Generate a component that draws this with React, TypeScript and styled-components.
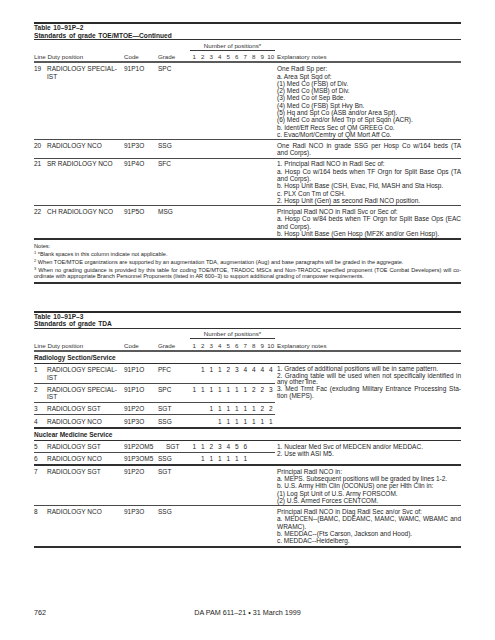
import styled, { createGlobalStyle } from 'styled-components';

const GlobalStyle = createGlobalStyle`
  body {
    margin: 0;
    background: #fff;
    color: #1e1e1e;
    font-family: 'Liberation Sans', Arial, sans-serif;
  }
`;

const COLS = '13px 77px 34px 32px repeat(10, 8.5px)';

type Nums = (number | '')[];

interface Line {
  t: string;
  fill?: boolean;
}

const Page = styled.div`
  box-sizing: border-box;
  width: 495px;
  height: 640px;
  padding: 22px 34px 23px;
  display: flex;
  flex-direction: column;
`;

const Table = styled.section<{ $gap?: number }>`
  border-top: 2px solid #2a2a2a;
  margin-top: ${(p) => p.$gap ?? 0}px;
`;

const Caption = styled.div`
  font-weight: 700;
  font-size: 6.6px;
  line-height: 7.6px;
  word-spacing: 0.8px;
  border-bottom: 1px solid #333;
`;

const Head = styled.div`
  display: grid;
  grid-template-columns: ${COLS} 2px 1fr;
  border-bottom: 2px solid #5a5a5a;
  font-size: 6.2px;
  line-height: 7px;
  color: #333;
`;

const PosLabel = styled.div`
  grid-column: 5 / 15;
  grid-row: 1;
  text-align: center;
  padding: 1.5px 0 1px;
  border-bottom: 1px solid #3a3a3a;
`;

const HeadCell = styled.div<{ $span?: number; $center?: boolean }>`
  grid-row: 2;
  grid-column: span ${(p) => p.$span ?? 1};
  padding: 2.8px 0 1px;
  white-space: nowrap;
  text-align: ${(p) => (p.$center ? 'center' : 'left')};
`;

const Row = styled.div<{ $rule?: 'thin' | 'thick' }>`
  display: grid;
  grid-template-columns: ${COLS} 2px 1fr;
  padding: 1.8px 0 1px;
  font-size: 6.5px;
  line-height: 7.3px;
  border-bottom: ${(p) => (p.$rule === 'thick' ? '2px solid #2f2f2f' : '1.5px solid #4a4a4a')};
`;

const Cell = styled.div<{ $shift?: number }>`
  white-space: nowrap;
  padding-left: ${(p) => p.$shift ?? 0}px;
`;

const Num = styled.div`
  text-align: center;
`;

const Notes = styled.div`
  grid-column: 16;
`;

const NoteLine = styled.div<{ $fill?: boolean }>`
  white-space: ${(p) => (p.$fill ? 'normal' : 'nowrap')};
  text-align: ${(p) => (p.$fill ? 'justify' : 'left')};
  text-align-last: ${(p) => (p.$fill ? 'justify' : 'left')};
`;

const Section = styled.div`
  font-weight: 700;
  font-size: 6.5px;
  line-height: 7.3px;
  padding: 2px 0 1.5px;
  border-bottom: 1px solid #2f2f2f;
`;

const Group = styled.div`
  display: grid;
  grid-template-columns: 241px 2px 1fr;
  border-bottom: 2px solid #2f2f2f;
  font-size: 6.5px;
  line-height: 7.3px;
`;

const SubRow = styled.div`
  display: grid;
  grid-template-columns: ${COLS};
  padding: 2.3px 0 1.7px;

  & + & {
    border-top: 1px solid #4a4a4a;
  }
`;

const GroupNotes = styled.div<{ $lh: number }>`
  grid-column: 3;
  padding-top: 2.3px;
  line-height: ${(p) => p.$lh}px;
`;

const NotesBlock = styled.div`
  padding: 2.5px 0 3.5px;
  border-bottom: 2px solid #2f2f2f;
  font-size: 5.6px;
  line-height: 6px;
`;

const FootNote = styled.div`
  margin-top: 2px;
`;

const FootLine = styled.span<{ $fill?: boolean }>`
  display: block;
  text-align: ${(p) => (p.$fill ? 'justify' : 'left')};
  text-align-last: ${(p) => (p.$fill ? 'justify' : 'left')};
`;

const Sup = styled.sup`
  font-size: 4px;
  vertical-align: 2px;
  line-height: 0;
`;

const Footer = styled.footer`
  margin-top: auto;
  display: grid;
  grid-template-columns: 1fr auto 1fr;
  font-size: 7.2px;
  line-height: 9px;
`;

function NoteLines({ lines }: { lines: Line[] }) {
  return (
    <>
      {lines.map((l, i) => (
        <NoteLine key={i} $fill={l.fill}>
          {l.t}
        </NoteLine>
      ))}
    </>
  );
}

function TableHead() {
  return (
    <Head>
      <PosLabel>Number of positions*</PosLabel>
      <HeadCell $span={2}>Line Duty position</HeadCell>
      <HeadCell>Code</HeadCell>
      <HeadCell>Grade</HeadCell>
      {Array.from({ length: 10 }, (_, i) => (
        <HeadCell key={i} $center>
          {i + 1}
        </HeadCell>
      ))}
      <HeadCell />
      <HeadCell>Explanatory notes</HeadCell>
    </Head>
  );
}

interface Position {
  line: number;
  duty: string[];
  code: string;
  grade: string;
  nums?: Nums;
  shift?: number;
}

function PositionCells({ p }: { p: Position }) {
  const nums: Nums = p.nums ?? Array(10).fill('');
  return (
    <>
      <Cell>{p.line}</Cell>
      <Cell>
        {p.duty.map((d) => (
          <div key={d}>{d}</div>
        ))}
      </Cell>
      <Cell>{p.code}</Cell>
      <Cell $shift={p.shift}>{p.grade}</Cell>
      {nums.map((n, i) => (
        <Num key={i}>{n}</Num>
      ))}
    </>
  );
}

const toeRows: (Position & { notes: Line[] })[] = [
  {
    line: 19,
    duty: ['RADIOLOGY SPECIAL-', 'IST'],
    code: '91P1O',
    grade: 'SPC',
    notes: [
      { t: 'One Radl Sp per:' },
      { t: 'a. Area Spt Sqd of:' },
      { t: '(1) Med Co (FSB) of Div.' },
      { t: '(2) Med Co (MSB) of Div.' },
      { t: '(3) Med Co of Sep Bde.' },
      { t: '(4) Med Co (FSB) Spt Hvy Bn.' },
      { t: '(5) Hq and Spt Co (ASB and/or Area Spt).' },
      { t: '(6) Med Co and/or Med Trp of Spt Sqdn (ACR).' },
      { t: 'b. Ident/Eff Recs Sec of QM GREEG Co.' },
      { t: 'c. Evac/Mort/Cemtry of QM Mort Aff Co.' },
    ],
  },
  {
    line: 20,
    duty: ['RADIOLOGY NCO'],
    code: '91P3O',
    grade: 'SSG',
    notes: [
      { t: 'One Radl NCO in grade SSG per Hosp Co w/164 beds (TA', fill: true },
      { t: 'and Corps).' },
    ],
  },
  {
    line: 21,
    duty: ['SR RADIOLOGY NCO'],
    code: '91P4O',
    grade: 'SFC',
    notes: [
      { t: '1. Principal Radl NCO in Radl Sec of:' },
      { t: 'a. Hosp Co w/164 beds when TF Orgn for Split Base Ops (TA', fill: true },
      { t: 'and Corps).' },
      { t: 'b. Hosp Unit Base (CSH, Evac, Fld, MASH and Sta Hosp.' },
      { t: 'c. PLX Con Tm of CSH.' },
      { t: '2. Hosp Unit (Gen) as second Radl NCO position.' },
    ],
  },
  {
    line: 22,
    duty: ['CH RADIOLOGY NCO'],
    code: '91P5O',
    grade: 'MSG',
    notes: [
      { t: 'Principal Radl NCO in Radl Svc or Sec of:' },
      { t: 'a. Hosp Co w/84 beds when TF Orgn for Split Base Ops (EAC', fill: true },
      { t: 'and Corps).' },
      { t: 'b. Hosp Unit Base (Gen Hosp (MF2K and/or Gen Hosp).' },
    ],
  },
];

const radiologyGroup: Position[] = [
  { line: 1, duty: ['RADIOLOGY SPECIAL-', 'IST'], code: '91P1O', grade: 'PFC', nums: ['', 1, 1, 1, 2, 3, 4, 4, 4, 4] },
  { line: 2, duty: ['RADIOLOGY SPECIAL-', 'IST'], code: '91P1O', grade: 'SPC', nums: [1, 1, 1, 1, 1, 1, 1, 2, 2, 3] },
  { line: 3, duty: ['RADIOLOGY SGT'], code: '91P2O', grade: 'SGT', nums: ['', '', 1, 1, 1, 1, 1, 1, 2, 2] },
  { line: 4, duty: ['RADIOLOGY NCO'], code: '91P3O', grade: 'SSG', nums: ['', '', '', 1, 1, 1, 1, 1, 1, 1] },
];

const nuclearGroup: Position[] = [
  { line: 5, duty: ['RADIOLOGY SGT'], code: '91P2OM5', grade: 'SGT', shift: 8, nums: [1, 1, 2, 3, 4, 5, 6, '', '', ''] },
  { line: 6, duty: ['RADIOLOGY NCO'], code: '91P3OM5', grade: 'SSG', nums: ['', 1, 1, 1, 1, 1, 1, '', '', ''] },
];

const tdaRows: (Position & { notes: Line[] })[] = [
  {
    line: 7,
    duty: ['RADIOLOGY SGT'],
    code: '91P2O',
    grade: 'SGT',
    notes: [
      { t: 'Principal Radl NCO in:' },
      { t: 'a. MEPS. Subsequent positions will be graded by lines 1-2.' },
      { t: 'b. U.S. Army Hlth Clin (OCONUS) one per Hlth Clin in:' },
      { t: '(1) Log Spt Unit of U.S. Army FORSCOM.' },
      { t: '(2) U.S. Armed Forces CENTCOM.' },
    ],
  },
  {
    line: 8,
    duty: ['RADIOLOGY NCO'],
    code: '91P3O',
    grade: 'SSG',
    notes: [
      { t: 'Principal Radl NCO in Diag Radl Sec an/or Svc of:' },
      { t: 'a. MEDCEN--(BAMC, DDEAMC, MAMC, WAMC, WBAMC and', fill: true },
      { t: 'WRAMC).' },
      { t: 'b. MEDDAC--(Fts Carson, Jackson and Hood).' },
      { t: 'c. MEDDAC--Heidelberg.' },
    ],
  },
];

function PositionGroup({ rows, notes, lh }: { rows: Position[]; notes: Line[]; lh: number }) {
  return (
    <Group>
      <div>
        {rows.map((r) => (
          <SubRow key={r.line}>
            <PositionCells p={r} />
          </SubRow>
        ))}
      </div>
      <GroupNotes $lh={lh}>
        <NoteLines lines={notes} />
      </GroupNotes>
    </Group>
  );
}

export default function App() {
  return (
    <Page>
      <GlobalStyle />
      <Table>
        <Caption>
          <div>Table 10–91P–2</div>
          <div>Standards of grade TOE/MTOE—Continued</div>
        </Caption>
        <TableHead />
        {toeRows.map((r, i) => (
          <Row key={r.line} $rule={i === toeRows.length - 1 ? 'thick' : 'thin'}>
            <PositionCells p={r} />
            <Notes>
              <NoteLines lines={r.notes} />
            </Notes>
          </Row>
        ))}
        <NotesBlock>
          <div>Notes:</div>
          <FootNote>
            <Sup>1</Sup> *Blank spaces in this column indicate not applicable.
          </FootNote>
          <FootNote>
            <Sup>2</Sup> When TOE/MTOE organizations are supported by an augmentation TDA, augmentation (Aug) and base
            paragraphs will be graded in the aggregate.
          </FootNote>
          <FootNote>
            <FootLine $fill>
              <Sup>3</Sup> When no grading guidance is provided by this table for coding TOE/MTOE, TRADOC MSCs and
              Non-TRADOC specified proponent (TOE Combat Developers) will co-
            </FootLine>
            <FootLine>
              ordinate with appropriate Branch Personnel Proponents (listed in AR 600–3) to support additional grading
              of manpower requirements.
            </FootLine>
          </FootNote>
        </NotesBlock>
      </Table>

      <Table $gap={26.5}>
        <Caption>
          <div>Table 10–91P–3</div>
          <div>Standards of grade TDA</div>
        </Caption>
        <TableHead />
        <Section>Radiology Section/Service</Section>
        <PositionGroup
          rows={radiologyGroup}
          lh={6.6}
          notes={[
            { t: '1. Grades of additional positions will be in same pattern.' },
            { t: '2. Grading table will be used when not specifically identified in', fill: true },
            { t: 'any other line.' },
            { t: '3. Med Trmt Fac (excluding Military Entrance Processing Sta-', fill: true },
            { t: 'tion (MEPS).' },
          ]}
        />
        <Section>Nuclear Medicine Service</Section>
        <PositionGroup
          rows={nuclearGroup}
          lh={7}
          notes={[{ t: '1. Nuclear Med Svc of MEDCEN and/or MEDDAC.' }, { t: '2. Use with ASI M5.' }]}
        />
        {tdaRows.map((r, i) => (
          <Row key={r.line} $rule={i === tdaRows.length - 1 ? 'thick' : 'thin'}>
            <PositionCells p={r} />
            <Notes>
              <NoteLines lines={r.notes} />
            </Notes>
          </Row>
        ))}
      </Table>

      <Footer>
        <span>762</span>
        <span>DA PAM 611–21 • 31 March 1999</span>
        <span />
      </Footer>
    </Page>
  );
}
